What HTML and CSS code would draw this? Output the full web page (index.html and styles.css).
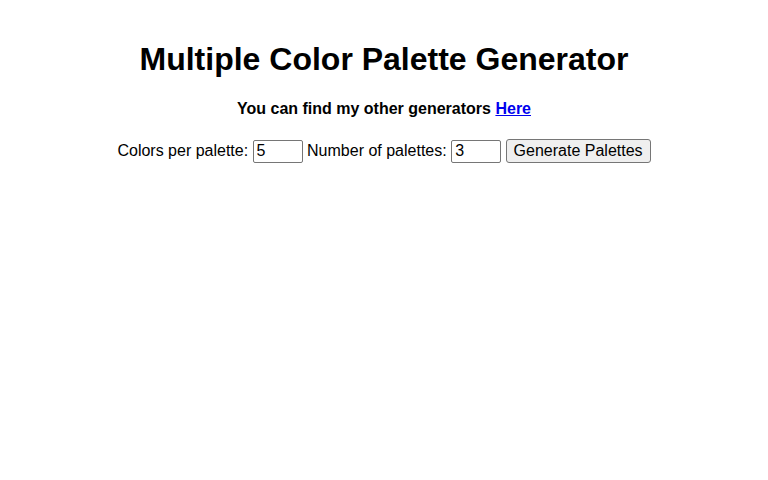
FILE: index.html
```html
<!DOCTYPE html>
<html>
<head>
<meta charset="utf-8">
<link rel="stylesheet" href="styles.css">
</head>
<body class="page">
<h1 class="title">Multiple Color Palette Generator</h1>
<p class="intro">You can find my other generators <a class="link" href="#">Here</a></p>
<div class="controls">
  <label class="label" for="cpp">Colors per palette:</label>
  <input class="num" id="cpp" type="text" value="5">
  <label class="label" for="np">Number of palettes:</label>
  <input class="num" id="np" type="text" value="3">
  <button class="btn" type="button">Generate Palettes</button>
</div>
</body>
</html>
```
FILE: styles.css
```css
.page {
  margin: 8px;
  padding-top: 12px;
  font-family: "Liberation Sans", Arial, sans-serif;
  font-size: 16px;
  color: #000;
  background: #fff;
  text-align: center;
}
.title {
  font-size: 32px;
  font-weight: bold;
  margin: 21px 0 22px;
}
.intro {
  font-weight: bold;
  margin: 16px 0;
}
.link {
  color: #0000ee;
  text-decoration: underline;
}
.controls {
  margin-top: 21px;
}
.label {
  font-size: 16px;
}
.num {
  width: 43px;
  height: 19px;
  box-sizing: content-box;
  font-family: "Liberation Sans", Arial, sans-serif;
  font-size: 16px;
  padding: 1px 2px 1px 3px;
  border: 1px solid #767676;
  border-radius: 2px;
  text-align: left;
}
.btn {
  font-family: "Liberation Sans", Arial, sans-serif;
  font-size: 16px;
  padding: 2px 7px;
  border: 1px solid #767676;
  border-radius: 3px;
  background: #efefef;
}
```
